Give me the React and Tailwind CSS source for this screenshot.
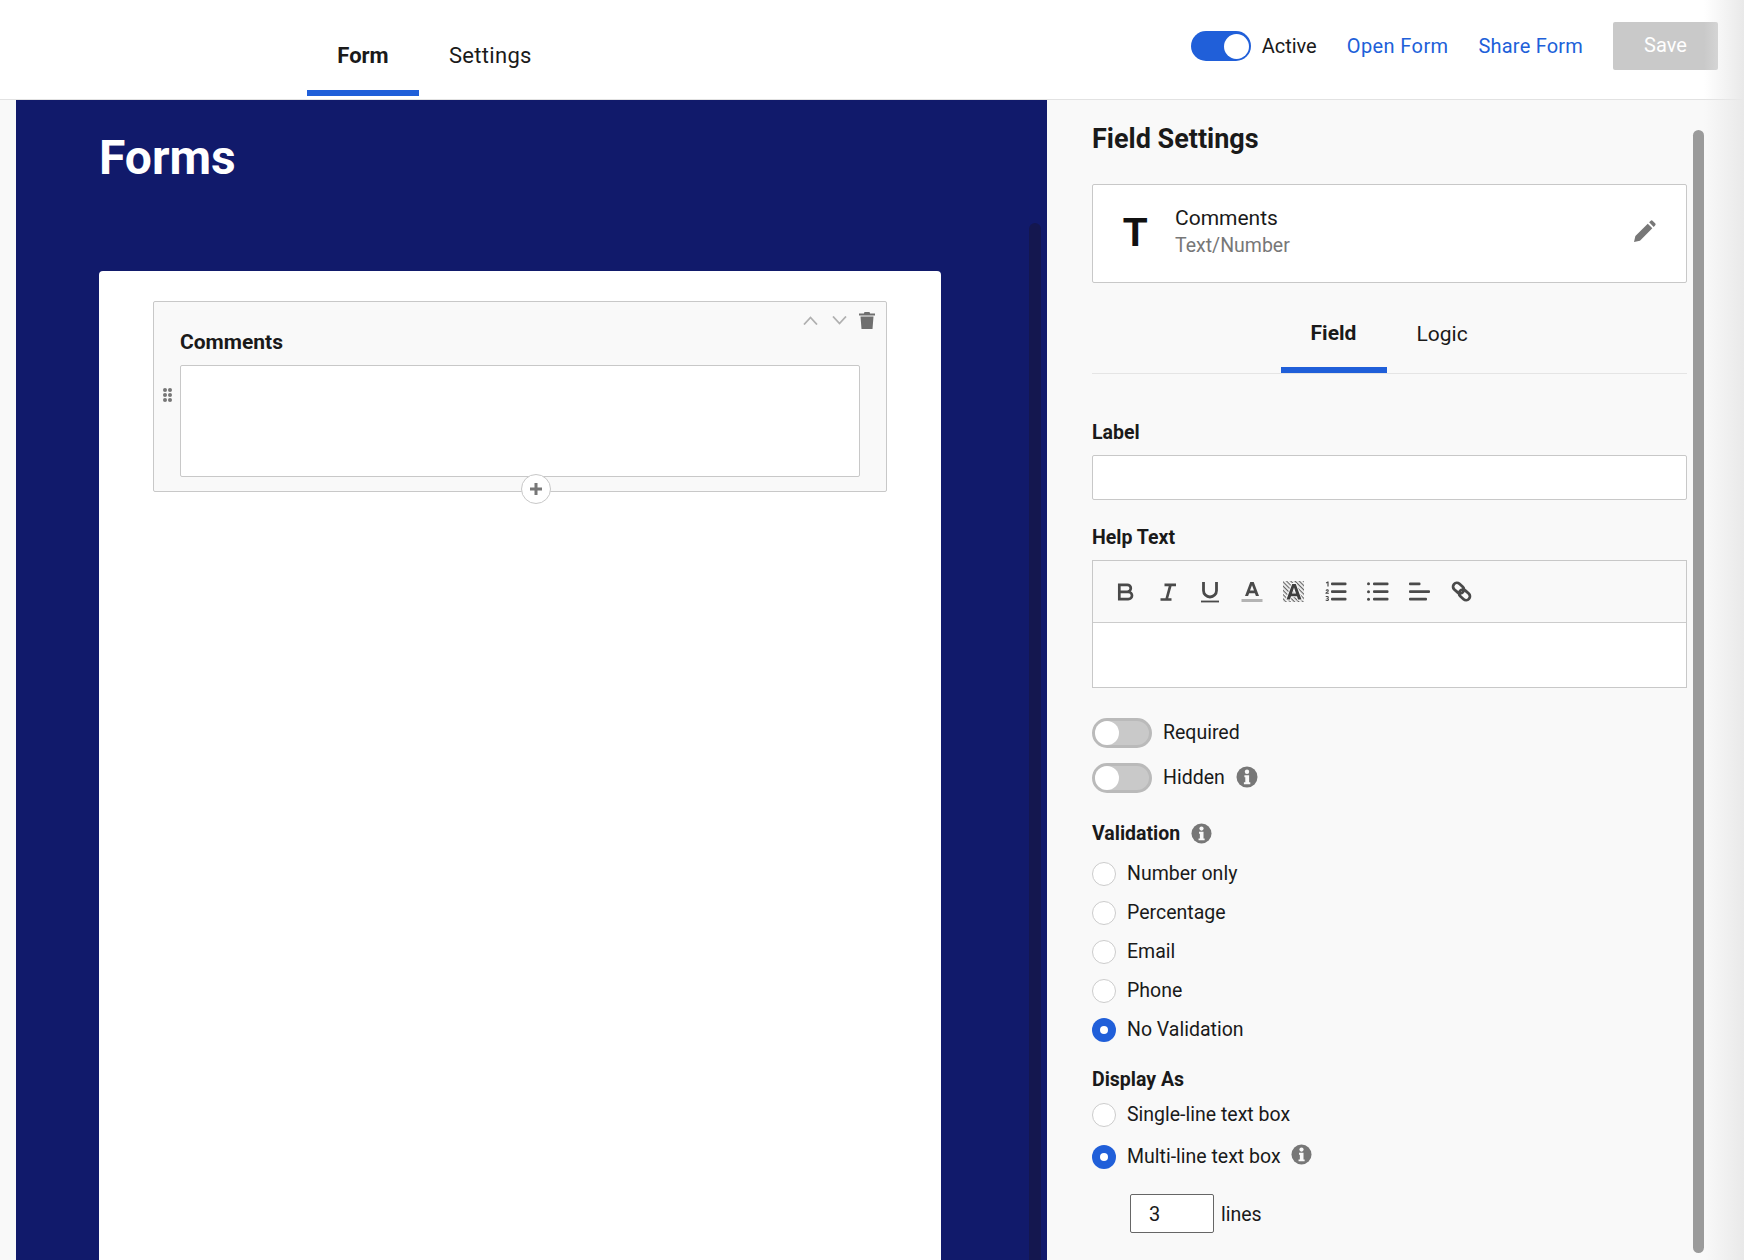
const blue = "#205fd9";

function InfoIcon({ className }) {
  return (
    <svg viewBox="0 0 22 22" className={className}>
      <circle cx="11" cy="11" r="10.5" fill="#777" />
      <circle cx="11" cy="5.800" r="2.200" fill="#f9f9f9" />
      <path d="M8.400 9.200h4.700v7h1.200v2H7.900v-2h1.400v-5H8.400z" fill="#f9f9f9" />
    </svg>
  );
}

function Toggle({ on }) {
  if (on) {
    return (
      <span className="flex items-center justify-end w-[60px] h-[30px] rounded-full bg-[#205fd9] pr-[2px]">
        <span className="w-[25px] h-[25px] rounded-full bg-white" />
      </span>
    );
  }
  return (
    <span className="flex items-center w-[60px] h-[30px] rounded-full bg-[#c9c9c9] border-[3px] border-[#bababa]">
      <span className="w-6 h-6 rounded-full bg-white" />
    </span>
  );
}

function Radio({ checked, label, className, children }) {
  return (
    <div className={"flex items-center h-6 " + (className || "")}>
      {checked ? (
        <span className="w-6 h-6 rounded-full bg-[#205fd9] flex items-center justify-center">
          <span className="w-2 h-2 rounded-full bg-white" />
        </span>
      ) : (
        <span className="w-6 h-6 rounded-full bg-white border border-[#cccccc]" />
      )}
      <span className="ml-[11px] text-[19.5px] leading-6 text-[#1a1a1a]">{label}</span>
      {children}
    </div>
  );
}

function ToolbarIcons() {
  const c = "#4a4a4a";
  return (
    <div className="flex items-center gap-[20px] pl-[22px] h-[62px] bg-[#f9f9f9] border-b border-[#cccccc]">
      <svg viewBox="0 0 22 22" className="w-[22px] h-[22px]" fill="none" stroke={c} strokeWidth="2.700">
        <path d="M4.300 3.800h8a3.500 3.500 0 0 1 0 7h-8zM4.300 10.800h9a3.700 3.700 0 0 1 0 7.400h-9z" />
      </svg>
      <svg viewBox="0 0 22 22" className="w-[22px] h-[22px]" fill="none" stroke={c} strokeWidth="2.700">
        <path d="M7.500 3.800h11.500M13.500 3.800 9.500 18.500M3.500 18.500h11" />
      </svg>
      <svg viewBox="0 0 22 22" className="w-[22px] h-[22px]" fill="none" stroke={c} strokeWidth="2.800">
        <path d="M4.500 1v8.500a6.500 6.500 0 0 0 13 0V1" />
        <path d="M2 20.500h18" strokeWidth="1.800" />
      </svg>
      <svg viewBox="0 0 22 22" className="w-[22px] h-[22px]">
        <path d="M4 15 9.300 1h3.400L18 15h-3.100l-1-2.800H8.100L7.100 15zM9 9.600h4L11 4.300z" fill={c} />
        <rect x="0.500" y="18" width="21" height="3" fill="#b4b4b4" />
      </svg>
      <svg viewBox="0 0 22 22" className="w-[22px] h-[22px]">
        <defs>
          <pattern id="hatch" width="3" height="3" patternUnits="userSpaceOnUse" patternTransform="rotate(45)">
            <rect width="3" height="1.200" fill="#666" />
          </pattern>
        </defs>
        <rect width="21" height="21" fill="url(#hatch)" />
        <path d="M3.500 18.500 9.200 3h3.600l5.700 15.500h-3.500l-1-3.200H8l-1 3.200zM9 12.400h4L11 6.600z" fill="#3f3f3f" stroke="#f9f9f9" strokeWidth="1.800" paintOrder="stroke" />
      </svg>
      <svg viewBox="0 0 22 22" className="w-[22px] h-[22px]" fill={c}>
        <rect x="6" y="1.500" width="15.500" height="2.700" rx="1" />
        <rect x="6" y="9.300" width="15.500" height="2.700" rx="1" />
        <rect x="6" y="16.800" width="15.500" height="2.700" rx="1" />
        <path d="M.8 1.500 2.600.4h1v5H2.400V2.100l-1.100.5zM.4 12.400c.2-1.300 2.900-1.900 2.200-2.800-.3-.4-1-.1-1.300.3l-.8-.6c.8-1.400 3.300-1.300 3.300.4 0 1.100-1.300 1.500-1.900 2h2v1H.4zM.5 15.400c.9-.8 3.400-.6 3.400.9 0 .5-.3.800-.7 1 .5.200.8.600.8 1.100 0 1.800-2.900 2-3.700.7l.8-.6c.4.600 1.700.7 1.700-.2 0-.5-.6-.6-1.300-.5v-.9c.6 0 1.200 0 1.200-.5 0-.7-1.200-.6-1.700-.2z" />
      </svg>
      <svg viewBox="0 0 22 22" className="w-[22px] h-[22px]" fill={c}>
        <circle cx="1.500" cy="2.800" r="1.500" />
        <circle cx="1.500" cy="10.700" r="1.500" />
        <circle cx="1.500" cy="18.200" r="1.500" />
        <rect x="6" y="1.500" width="15.500" height="2.700" rx="1" />
        <rect x="6" y="9.300" width="15.500" height="2.700" rx="1" />
        <rect x="6" y="16.800" width="15.500" height="2.700" rx="1" />
      </svg>
      <svg viewBox="0 0 22 22" className="w-[22px] h-[22px]" fill={c}>
        <rect x="0" y="1.500" width="11.500" height="2.700" rx="1" />
        <rect x="0" y="9.300" width="21" height="2.700" rx="1" />
        <rect x="0" y="16.800" width="18" height="2.700" rx="1" />
      </svg>
      <svg viewBox="0 0 22 22" className="w-[22px] h-[22px]" fill="none" stroke={c} strokeWidth="2.800">
        <rect x="1.500" y="3.300" width="12" height="7.600" rx="3.800" transform="rotate(42 7.500 7.100)" />
        <rect x="7.500" y="10.100" width="12" height="7.600" rx="3.800" transform="rotate(42 13.500 13.900)" />
      </svg>
    </div>
  );
}

export default function App() {
  return (
    <div className="relative h-[1260px] overflow-hidden flex flex-col bg-[#f9f9f9] text-[#1a1a1a] font-['Roboto',sans-serif] text-[20px]">
      {/* top bar */}
      <header className="flex h-[100px] shrink-0 bg-white border-b border-[#e2e2e2]">
        <nav className="flex ml-[307px] h-[96px] text-[22px]">
          <div className="w-[112px] flex items-center justify-center pt-[21px] font-bold border-b-[6px] border-[#205fd9]">Form</div>
          <div className="ml-[30px] flex items-center pt-[21px] pb-[6px] tracking-[0.3px]">Settings</div>
        </nav>
        <div className="ml-auto flex items-center h-[92px] pr-[26px]">
          <Toggle on />
          <span className="ml-[11px]">Active</span>
          <a className="ml-[30px] text-[#205fd9] tracking-[0.4px]">Open Form</a>
          <a className="ml-[30px] text-[#205fd9] tracking-[0.2px]">Share Form</a>
          <button className="ml-[30px] w-[105px] h-[48px] rounded-[2px] bg-[#c9c9c9] text-white pb-[2px]">Save</button>
        </div>
      </header>

      <div className="flex flex-1 min-h-0">
        <div className="w-4 shrink-0" />
        {/* builder canvas */}
        <main className="relative w-[1031px] shrink-0 bg-[#111a6b] pl-[83px] pr-[106px]">
          <h1 className="pt-[30px] text-[48px] leading-[56px] font-bold text-white">Forms</h1>
          <div className="mt-[85px] h-full rounded-[4px] bg-white pt-[30px] pl-[54px] pr-[54px]">
            <div className="relative h-[191px] rounded-[2px] border border-[#c8c8c8] bg-[#f9f9f9] px-[26px] pt-[28px]">
              <div className="absolute right-[11px] top-[10px] flex items-center">
                <svg viewBox="0 0 15 9" className="w-[15px] h-[9px]" fill="none" stroke="#b0b0b0" strokeWidth="1.800">
                  <path d="M1 8.500 7.500 1.500 14 8.500" />
                </svg>
                <svg viewBox="0 0 15 9" className="ml-[14px] w-[15px] h-[9px]" fill="none" stroke="#b0b0b0" strokeWidth="1.800">
                  <path d="M1 .5 7.500 7.500 14 .5" />
                </svg>
                <svg viewBox="0 0 16 17" className="ml-[12px] w-4 h-[17px]" fill="#6f6f6f">
                  <path d="M5.500 0h5l.6 1.500H16v2H0v-2h4.900zM1.500 4.500h13l-1 12.500h-11z" />
                </svg>
              </div>
              <div className="absolute left-[9px] top-[86px] grid grid-cols-2 gap-[1px]">
                {[0, 1, 2, 3, 4, 5].map((i) => (
                  <span key={i} className="w-1 h-1 rounded-full bg-[#777]" />
                ))}
              </div>
              <div className="font-bold text-[21px] leading-[24px]">Comments</div>
              <div className="mt-[11px] h-[112px] rounded-[2px] border border-[#c8c8c8] bg-white" />
              <div className="absolute left-[367px] top-[172px] w-[30px] h-[30px] rounded-full border border-[#c8c8c8] bg-white flex items-center justify-center">
                <svg viewBox="0 0 12 12" className="w-3 h-3" fill="none" stroke="#777" strokeWidth="3">
                  <path d="M6 0v12M0 6h12" />
                </svg>
              </div>
            </div>
          </div>
          <div className="absolute right-[6px] top-[123px] bottom-0 w-3 rounded-t-full bg-[#14174f]" />
        </main>

        {/* settings panel */}
        <aside className="relative flex-1 pl-[45px] pr-[57px] pt-[20px]">
          <h2 className="text-[27px] leading-[38px] font-bold">Field Settings</h2>
          <div className="mt-[26px] h-[99px] flex items-center rounded-[2px] border border-[#c8c8c8] bg-white pl-[30px] pr-[30px] pb-1">
            <span className="w-[52px] text-[40px] leading-none font-bold font-['Liberation_Sans',sans-serif] text-[#111]">T</span>
            <div className="flex flex-col">
              <span className="text-[21px] leading-[27px]">Comments</span>
              <span className="text-[19.5px] leading-[27px] text-[#777]">Text/Number</span>
            </div>
            <svg viewBox="0 0 24 24" className="ml-auto w-[22px] h-[22px] mb-[2px]" fill="#777">
              <path d="M0 24l1.500-6.500L15 4l5 5L6.500 22.500zM16.500 2.500 18 1a1.800 1.800 0 0 1 2.500 0L23 3.500a1.800 1.800 0 0 1 0 2.500L21.500 7.500z" />
            </svg>
          </div>
          <div className="mt-[14px] h-[77px] flex justify-center border-b border-[#e5e5e5] pr-[20px] text-[21px]">
            <div className="w-[106px] flex items-center justify-center pt-[4px] font-bold border-b-[6px] border-[#205fd9]">Field</div>
            <div className="ml-[30px] w-[62px] flex items-center pt-[6px] pb-[6px]">Logic</div>
          </div>

          <div className="mt-[46px] font-bold text-[19.5px] leading-[26px]">Label</div>
          <div className="mt-[9px] h-[45px] rounded-[2px] border border-[#c8c8c8] bg-white" />

          <div className="mt-[25px] font-bold text-[19.5px] leading-[26px]">Help Text</div>
          <div className="mt-[9px] h-[128px] border border-[#c8c8c8] bg-white">
            <ToolbarIcons />
          </div>

          <div className="mt-[30px] flex items-center gap-[11px] text-[19.5px]">
            <Toggle />
            <span className="pb-[1px]">Required</span>
          </div>
          <div className="mt-[15px] flex items-center gap-[11px] text-[19.5px]">
            <Toggle />
            <span className="pb-[1px]">Hidden</span>
            <InfoIcon className="w-[22px] h-[22px] mb-[3px]" />
          </div>

          <div className="mt-[28px] flex items-center gap-[11px] h-6">
            <span className="font-bold text-[19.5px]">Validation</span>
            <InfoIcon className="w-[21px] h-[21px] mb-[1px]" />
          </div>
          <Radio label="Number only" className="mt-[16px]" />
          <Radio label="Percentage" className="mt-[15px]" />
          <Radio label="Email" className="mt-[15px]" />
          <Radio label="Phone" className="mt-[15px]" />
          <Radio checked label="No Validation" className="mt-[15px]" />

          <div className="mt-[26px] font-bold text-[19.5px] leading-6">Display As</div>
          <Radio label="Single-line text box" className="mt-[11px]" />
          <Radio checked label="Multi-line text box" className="mt-[18px]">
            <InfoIcon className="w-[21px] h-[21px] ml-[10px] mb-[5px]" />
          </Radio>
          <div className="mt-[25px] ml-[38px] flex items-center">
            <div className="w-[84px] h-[39px] rounded-[2px] border border-[#666] bg-white pl-[18px] pt-[2px] flex items-center">3</div>
            <span className="ml-[7px] pt-[3px] text-[19.5px]">lines</span>
          </div>
          <div className="absolute left-[646px] top-[30px] w-[11px] h-[1123px] rounded-full bg-[#9b9b9b]" />
        </aside>
      </div>

      {/* soft fade down the right edge */}
      <div className="absolute right-0 top-0 bottom-0 w-[40px] bg-gradient-to-r from-transparent to-[#e9e9e9] pointer-events-none" />
    </div>
  );
}
